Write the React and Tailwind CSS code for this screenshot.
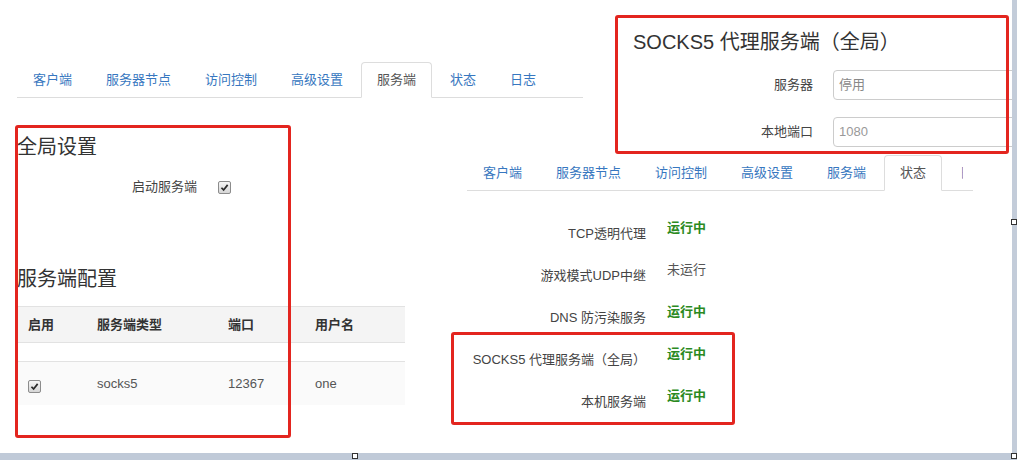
import React from "react";

const topTabs = ["客户端", "服务器节点", "访问控制", "高级设置", "服务端", "状态", "日志"];

const statusRows = [
  { label: "TCP透明代理", value: "运行中", running: true },
  { label: "游戏模式UDP中继", value: "未运行", running: false },
  { label: "DNS 防污染服务", value: "运行中", running: true },
  { label: "SOCKS5 代理服务端（全局）", value: "运行中", running: true },
  { label: "本机服务端", value: "运行中", running: true },
];

function CheckBox() {
  return (
    <span className="inline-flex h-[13px] w-[13px] items-center justify-center rounded-[2px] border border-[#8c8c8c] bg-linear-to-b from-[#f6f6f6] to-[#d6d6d6]">
      <svg viewBox="0 0 10 10" className="h-[9px] w-[9px]">
        <path d="M1.6 5.3 L4 7.7 L8.5 2.1" fill="none" stroke="#2a2a2a" strokeWidth="1.9" />
      </svg>
    </span>
  );
}

function Tabs({ active, clipLast }) {
  return (
    <ul className="flex h-[36px] border-b border-[#dddddd]">
      {topTabs.map((tab, i) => {
        const isActive = tab === active;
        const isClipped = clipLast && i === topTabs.length - 1;
        return (
          <li
            key={tab}
            className={
              "-mb-px mr-[2px] flex h-[36px] items-center overflow-hidden whitespace-nowrap rounded-t-[4px] border px-[15px] text-[13px] " +
              (isActive
                ? "border-[#dddddd] border-b-white bg-white text-[#555555]"
                : "border-transparent text-[#3777c0]") +
              (isClipped ? " w-[20px] pr-0" : "")
            }
          >
            {tab}
          </li>
        );
      })}
    </ul>
  );
}

export default function App() {
  return (
    <div className="relative h-[460px] w-[1017px] overflow-hidden bg-white font-['Liberation_Sans','Noto_Sans_CJK_SC',sans-serif] text-[#333333]">
      {/* tab bar, top left */}
      <div className="absolute left-[17px] top-[62px] w-[566px] overflow-hidden">
        <Tabs active="服务端" />
      </div>

      {/* global settings + server table */}
      <div className="absolute left-[17px] top-[126px] w-[388px]">
        <h3 className="mt-[9px] h-[24px] text-[20px] leading-[24px] text-[#333333]">全局设置</h3>
        <div className="mt-[20px] flex h-[16px] items-center">
          <span className="w-[180px] text-right text-[13px] leading-[16px] text-[#444444]">启动服务端</span>
          <span className="ml-[21px] flex">
            <CheckBox />
          </span>
        </div>
        <h3 className="mt-[72px] h-[24px] text-[20px] leading-[24px] text-[#333333]">服务端配置</h3>
        <div className="mt-[15px] text-[13px]">
          <div className="grid h-[37px] grid-cols-[69px_131px_87px_1fr] items-center border-y border-[#e2e2e2] bg-[#f4f4f4] font-bold text-[#333333]">
            <span className="pl-[11px]">启用</span>
            <span className="pl-[11px]">服务端类型</span>
            <span className="pl-[11px]">端口</span>
            <span className="pl-[11px]">用户名</span>
          </div>
          <div className="h-[19px] border-b border-[#e2e2e2]" />
          <div className="grid h-[43px] grid-cols-[69px_131px_87px_1fr] items-center bg-[#fafafa] text-[#555555]">
            <span className="flex pl-[11px] pt-[6px]">
              <CheckBox />
            </span>
            <span className="pl-[11px]">socks5</span>
            <span className="pl-[11px]">12367</span>
            <span className="pl-[11px]">one</span>
          </div>
        </div>
      </div>

      {/* SOCKS5 form, top right */}
      <div className="absolute left-[615px] top-[15px] h-[139px] w-[397px] overflow-hidden">
        <h3 className="whitespace-nowrap pl-[18px] pt-[15px] text-[20px] leading-[24px] text-[#333333]">
          SOCKS5 代理服务端（全局）
        </h3>
        <div className="mt-[16px] flex h-[30px] items-center">
          <span className="w-[198px] shrink-0 text-right text-[13px] text-[#444444]">服务器</span>
          <div className="ml-[20px] flex h-[30px] w-[260px] shrink-0 items-center rounded-[4px] border border-[#cccccc] px-[5px] text-[13px] text-[#888888]">
            停用
          </div>
        </div>
        <div className="mt-[17px] flex h-[30px] items-center">
          <span className="w-[198px] shrink-0 text-right text-[13px] text-[#444444]">本地端口</span>
          <div className="ml-[20px] flex h-[30px] w-[260px] shrink-0 items-center rounded-[4px] border border-[#cccccc] px-[5px] text-[13px] text-[#999999]">
            1080
          </div>
        </div>
      </div>

      {/* status page, right */}
      <div className="absolute left-[467px] top-[155px] w-[506px] overflow-hidden">
        <Tabs active="状态" clipLast />
        <div className="mt-[21px] text-[13px]">
          {statusRows.map((row) => (
            <div key={row.label} className="flex h-[42px] items-start">
              <span className="w-[179px] whitespace-nowrap pt-[14px] text-right leading-[15px] text-[#444444]">
                {row.label}
              </span>
              <span
                className={
                  "ml-[21px] pt-[8px] leading-[15px] " +
                  (row.running ? "font-bold text-[#2b8a22]" : "text-[#555555]")
                }
              >
                {row.value}
              </span>
            </div>
          ))}
        </div>
      </div>

      {/* red highlight boxes */}
      <div className="pointer-events-none absolute left-[615px] top-[15px] h-[139px] w-[394px] rounded-[3px] border-[3px] border-[#e3251f]" />
      <div className="pointer-events-none absolute left-[15px] top-[125px] h-[313px] w-[276px] rounded-[3px] border-[3px] border-[#e3251f]" />
      <div className="pointer-events-none absolute left-[451px] top-[332px] h-[93px] w-[284px] rounded-[3px] border-[3px] border-[#e3251f]" />

      {/* canvas edges with resize handles */}
      <div className="absolute right-0 top-0 h-full w-[5px] bg-[#c3ccd9]" />
      <div className="absolute bottom-0 left-0 h-[7px] w-full bg-[#c0cad8]" />
      <div className="absolute left-[1011px] top-[219px] h-[6px] w-[6px] border border-[#333333] bg-white" />
      <div className="absolute left-[352px] top-[453px] h-[6px] w-[6px] border border-[#333333] bg-white" />
      <div className="absolute left-[1011px] top-[453px] h-[6px] w-[6px] border border-[#333333] bg-white" />
    </div>
  );
}
